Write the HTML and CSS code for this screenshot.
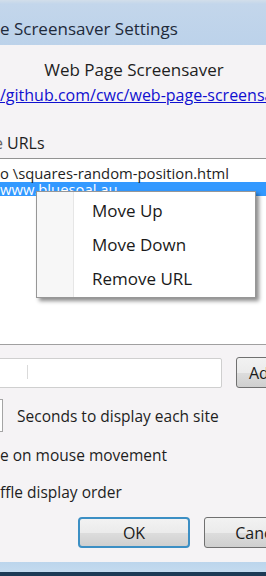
FILE: index.html
```html
<!DOCTYPE html>
<html lang="en">
<head>
    <meta charset="UTF-8">
    <meta name="viewport" content="width=device-width, initial-scale=1.0">
    <title>Web Page Screensaver Settings</title>
    <link rel="stylesheet" href="styles.css">
</head>
<body>
    <div class="window">
        <div class="titlebar">e Screensaver Settings</div>

        <div class="content">
            <div class="app-name">Web Page Screensaver</div>
            <div class="app-link"><a href="#">/github.com/cwc/web-page-screensaver</a></div>

            <div class="group-label"><span class="cut"><span>e</span></span>URLs</div>

            <div class="url-list">
                <div class="url-item">o \squares-random-position.html</div>
                <div class="url-item selected">www.bluesoal.au</div>

                <div class="context-menu">
                    <div class="menu-item">Move Up</div>
                    <div class="menu-item">Move Down</div>
                    <div class="menu-item">Remove URL</div>
                </div>
            </div>

            <div class="add-row">
                <div class="url-input"><span class="caret"></span></div>
                <button class="btn add-btn">Add</button>
            </div>

            <div class="seconds-row">
                <div class="spin-box"></div>
                <span class="seconds-label">Seconds to display each site</span>
            </div>

            <div class="check-line first">e on mouse movement</div>
            <div class="check-line">ffle display order</div>

            <div class="button-row">
                <button class="btn ok-btn">OK</button>
                <button class="btn cancel-btn">Cancel</button>
            </div>
        </div>

        <div class="taskbar"></div>
    </div>
</body>
</html>
```

FILE: styles.css
```css
* {
    box-sizing: border-box;
}
html, body {
    margin: 0;
    padding: 0;
}
body {
    width: 266px;
    height: 576px;
    overflow: hidden;
    font-family: "Open Sans", "Noto Sans", sans-serif;
    font-size: 15.5px;
    color: #1e1e1e;
    background-color: #f5f3f5;
}
.window {
    display: flex;
    flex-direction: column;
    height: 576px;
}
.titlebar {
    flex-shrink: 0;
    height: 45px;
    padding-top: 6px;
    line-height: 45px;
    font-size: 17px;
    color: #1e2a3a;
    white-space: nowrap;
    overflow: hidden;
    background: linear-gradient(#d2deea 0px, #c3d6eb 4px, #bcd2ea 45px);
}
.content {
    flex: 1;
    display: flex;
    flex-direction: column;
    background-color: #f5f3f5;
    white-space: nowrap;
    overflow: hidden;
}
.app-name {
    flex-shrink: 0;
    margin-top: 14px;
    height: 22px;
    line-height: 22px;
    font-size: 17px;
    text-align: center;
    padding-left: 2px;
}
.app-link {
    flex-shrink: 0;
    margin-top: 2px;
    height: 24px;
    line-height: 24px;
    font-size: 16px;
}
.app-link a {
    color: #1010d0;
    text-decoration: underline;
}
.group-label {
    flex-shrink: 0;
    margin-top: 24px;
    height: 24px;
    line-height: 24px;
    font-size: 16px;
}
.group-label .cut {
    display: inline-block;
    width: 3px;
    margin-right: 4px;
    overflow: hidden;
    vertical-align: top;
}
.group-label .cut span {
    display: inline-block;
    margin-left: -6px;
    color: #666;
}
.url-list {
    flex-shrink: 0;
    position: relative;
    margin-top: 3px;
    height: 187px;
    background-color: #fff;
    border-top: 1px solid #939393;
    border-bottom: 1px solid #a0a0a0;
    padding-top: 6px;
    font-size: 14.8px;
}
.url-item {
    height: 16px;
    line-height: 16px;
}
.url-item.selected {
    margin-top: 1px;
    height: 14px;
    line-height: 15px;
    background-color: #3399ff;
    color: #fff;
    overflow: hidden;
}
.context-menu {
    position: absolute;
    left: 36px;
    top: 32px;
    width: 220px;
    height: 107px;
    background: linear-gradient(to right, #f7f7f7 0, #f7f7f7 36px, #e6e6e6 36px, #e6e6e6 37px, #fff 37px);
    border: 1px solid #979797;
    box-shadow: 3px 3px 4px rgba(0, 0, 0, 0.45);
    padding-top: 2px;
}
.menu-item {
    height: 34px;
    line-height: 34px;
    padding-left: 55px;
    font-size: 17px;
    color: #1a1a1a;
}
.add-row {
    flex-shrink: 0;
    display: flex;
    margin-top: 12px;
    height: 31px;
}
.url-input {
    flex-shrink: 0;
    position: relative;
    width: 226px;
    margin-left: -4px;
    height: 30px;
    margin-top: 1px;
    background-color: #fff;
    border: 1px solid #cfcfcf;
    border-radius: 2px;
}
.caret {
    position: absolute;
    left: 30px;
    top: 6px;
    width: 1px;
    height: 14px;
    background-color: #dadada;
}
.btn {
    flex-shrink: 0;
    font-family: inherit;
    font-size: 16px;
    color: #1a1a1a;
    border: 1px solid #707070;
    border-radius: 3px;
    background: linear-gradient(#f2f2f2 0, #ebebeb 50%, #dddddd 51%, #cfcfcf 100%);
    padding: 0;
    white-space: nowrap;
    overflow: hidden;
}
.add-btn {
    margin-left: 14px;
    width: 60px;
    height: 31px;
    text-align: left;
    padding-left: 12px;
}
.seconds-row {
    flex-shrink: 0;
    display: flex;
    align-items: center;
    margin-top: 11px;
    height: 33px;
}
.spin-box {
    flex-shrink: 0;
    width: 20px;
    margin-left: -17px;
    height: 33px;
    background-color: #fff;
    border: 1px solid #a5a5a5;
}
.seconds-label {
    margin-left: 14px;
}
.check-line {
    flex-shrink: 0;
    margin-top: 4px;
    height: 33px;
    line-height: 33px;
}
.check-line.first {
    margin-top: 7px;
}
.button-row {
    flex-shrink: 0;
    display: flex;
    margin-top: 8px;
    height: 31px;
}
.ok-btn {
    margin-left: 78px;
    width: 112px;
    height: 31px;
    border: 2px solid #3c8fc4;
    border-radius: 4px;
}
.cancel-btn {
    margin-left: 14px;
    width: 112px;
    height: 31px;
}
.taskbar {
    flex-shrink: 0;
    height: 14px;
    background: linear-gradient(#bcd5ec 0, #c4dbef 10px, #1c3a55 10px);
}
```
